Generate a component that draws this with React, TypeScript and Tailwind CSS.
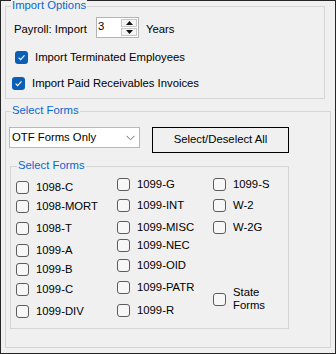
import React from "react";

function Box({ checked }: { checked?: boolean }) {
  return checked ? (
    <span className="w-[13px] h-[13px] shrink-0 rounded-[3px] bg-[#0a5fb4] flex items-center justify-center">
      <svg width="9" height="9" viewBox="0 0 9 9">
        <path d="M1.6 4.7 L3.6 6.7 L7.5 2.3" fill="none" stroke="#fff" strokeWidth="1.1" />
      </svg>
    </span>
  ) : (
    <span className="w-[13px] h-[13px] shrink-0 rounded-[3px] border border-[#5c5c5c] bg-[#f7f7f7]" />
  );
}

function Item({ label, mt }: { label: string; mt: string }) {
  return (
    <div className={"flex items-center h-[18px] gap-[7px] " + mt}>
      <Box />
      <span className="whitespace-nowrap">{label}</span>
    </div>
  );
}

const col1: [string, string][] = [
  ["1098-C", "mt-[11px]"],
  ["1098-MORT", "mt-[1px]"],
  ["1098-T", "mt-[4px]"],
  ["1099-A", "mt-[4px]"],
  ["1099-B", "mt-[1px]"],
  ["1099-C", "mt-[2px]"],
  ["1099-DIV", "mt-[4px]"],
];
const col2: [string, string][] = [
  ["1099-G", "mt-[8px]"],
  ["1099-INT", "mt-[3px]"],
  ["1099-MISC", "mt-[4px]"],
  ["1099-NEC", "mt-[0px]"],
  ["1099-OID", "mt-[2px]"],
  ["1099-PATR", "mt-[4px]"],
  ["1099-R", "mt-[5px]"],
];
const col3: [string, string][] = [
  ["1099-S", "mt-[8px]"],
  ["W-2", "mt-[3px]"],
  ["W-2G", "mt-[4px]"],
];

export default function App() {
  return (
    <div className="w-[336px] h-[354px] bg-[#f0f0f0] border border-[#262626] text-black font-['Liberation_Sans',Arial,sans-serif] text-[11.3px] leading-[13px]">
      {/* Import Options */}
      <div className="relative ml-[4px] mt-[5px] w-[320px] h-[93px] border border-[#d5d5d5]">
        <span className="absolute left-[5px] -top-[8px] px-[1px] bg-[#f0f0f0] text-[#0b66d0]">Import Options</span>
        <div className="flex items-center mt-[10px] pl-[8px]">
          <span className="w-[82px] pt-[3px]">Payroll: Import</span>
          <div className="w-[43px] h-[21px] bg-white border border-[#b4b4b4] flex">
            <span className="flex-1 pl-[1px] pt-[2px]">3</span>
            <div className="w-[16px] mt-[1px] mr-[1px] flex flex-col">
              <div className="h-[8px] border border-[#c8c8c8] bg-[#f4f4f4] flex items-center justify-center">
                <svg width="7" height="4" viewBox="0 0 7 4"><path d="M0 4 L3.5 0 L7 4 Z" fill="#111" /></svg>
              </div>
              <div className="h-[8px] mt-[1px] border border-[#c8c8c8] bg-[#f4f4f4] flex items-center justify-center">
                <svg width="7" height="4" viewBox="0 0 7 4"><path d="M0 0 L3.5 4 L7 0 Z" fill="#111" /></svg>
              </div>
            </div>
          </div>
          <span className="ml-[7px] pt-[3px]">Years</span>
        </div>
        <div className="flex items-center gap-[7px] ml-[9px] mt-[12px] h-[14px]">
          <Box checked />
          <span>Import Terminated Employees</span>
        </div>
        <div className="flex items-center gap-[7px] ml-[6px] mt-[12px] h-[14px]">
          <Box checked />
          <span>Import Paid Receivables Invoices</span>
        </div>
      </div>

      {/* Select Forms */}
      <div className="relative ml-[4px] mt-[12px] w-[326px] h-[237px] border border-[#d5d5d5]">
        <span className="absolute left-[5px] -top-[8px] px-[1px] bg-[#f0f0f0] text-[#0b66d0]">Select Forms</span>
        <div className="flex items-start mt-[15px] ml-[3px]">
          <div className="w-[131px] h-[21px] bg-white border border-[#b8b8b8] flex items-center pl-[2px] pr-[4px]">
            <span className="flex-1">OTF Forms Only</span>
            <svg width="9" height="6" viewBox="0 0 9 6"><path d="M0.5 0.8 L4.5 4.8 L8.5 0.8" fill="none" stroke="#6a6a6a" strokeWidth="1" /></svg>
          </div>
          <button className="ml-[12px] w-[137px] h-[26px] border border-black bg-[#f0f0f0] flex items-center justify-center pb-[1px]">
            Select/Deselect All
          </button>
        </div>

        <div className="relative ml-[4px] mt-[13px] w-[279px] h-[163px] border border-[#d5d5d5]">
          <span className="absolute left-[6px] -top-[8px] px-[1px] bg-[#f0f0f0] text-[#0b66d0]">Select Forms</span>
          <div className="flex pl-[5px]">
            <div className="w-[101px] flex flex-col">
              {col1.map(([l, m]) => (
                <Item key={l} label={l} mt={m} />
              ))}
            </div>
            <div className="w-[96px] flex flex-col">
              {col2.map(([l, m]) => (
                <Item key={l} label={l} mt={m} />
              ))}
            </div>
            <div className="flex flex-col">
              {col3.map(([l, m]) => (
                <Item key={l} label={l} mt={m} />
              ))}
              <div className="flex items-center h-[26px] gap-[7px] mt-[50px]">
                <Box />
                <span>
                  State
                  <br />
                  Forms
                </span>
              </div>
            </div>
          </div>
        </div>
      </div>
    </div>
  );
}
